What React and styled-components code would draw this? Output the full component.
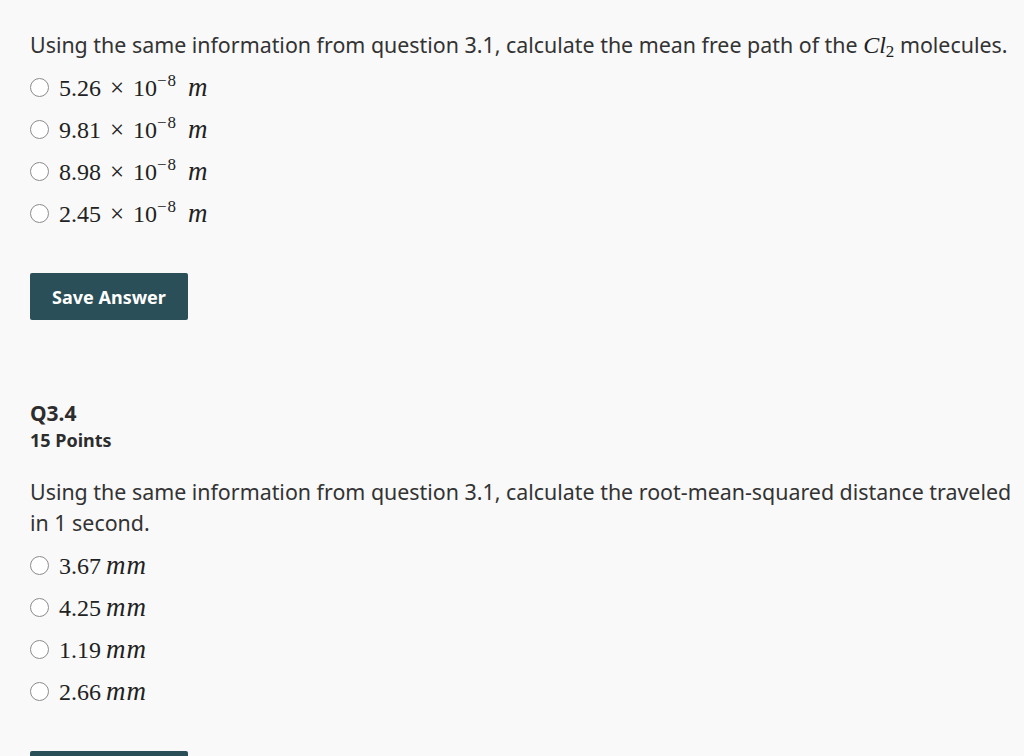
import React from "react";
import styled, { createGlobalStyle } from "styled-components";

const GlobalStyle = createGlobalStyle`
  html, body {
    margin: 0;
    padding: 0;
    background: #f9f9f9;
  }
  body {
    font-family: "Noto Sans", "Open Sans", sans-serif;
    color: #333;
    overflow: hidden;
  }
`;

const Page = styled.div`
  padding: 0 0 0 30px;
  margin-top: -22px;
`;

const Question = styled.section`
  display: flex;
  flex-direction: column;
`;

const Heading = styled.h2`
  margin: 0;
  font-size: 21px;
  font-weight: 700;
  line-height: 30px;
  color: #2d2d2d;
`;

const Points = styled.div`
  font-size: 18px;
  font-weight: 700;
  line-height: 24px;
  color: #2d2d2d;
`;

const Prompt = styled.p`
  margin: ${(p) => p.top}px 0 6px;
  font-size: 21.4px;
  line-height: 31px;
  color: #333;
`;

const Options = styled.div`
  display: flex;
  flex-direction: column;
`;

const Option = styled.label`
  display: flex;
  align-items: center;
  height: 42px;
  gap: 10px;
`;

const Radio = styled.span`
  width: 19px;
  height: 19px;
  box-sizing: border-box;
  border-radius: 50%;
  border: 1px solid #8c8c8c;
  background: #fff;
  flex-shrink: 0;
`;

const Math = styled.span`
  font-family: "Liberation Serif", "DejaVu Serif", serif;
  font-size: 24px;
  color: #222;
  white-space: nowrap;
  line-height: 1;
`;

const Op = styled.span`
  display: inline-block;
  width: 32px;
  text-align: center;
  font-size: 25px;
`;

const Var = styled.i`
  font-style: italic;
  font-size: ${(p) => p.size || 24}px;
  letter-spacing: ${(p) => p.spacing || 0}px;
  margin-left: ${(p) => p.gap || 0}px;
`;

const Sup = styled.sup`
  font-size: 17px;
  vertical-align: 0;
  position: relative;
  top: -10px;
  letter-spacing: 1px;
`;

const Sub = styled.sub`
  font-size: 17px;
  vertical-align: 0;
  position: relative;
  top: 4px;
`;

const SaveButton = styled.button`
  align-self: flex-start;
  width: 158px;
  height: 47px;
  margin-top: 39px;
  border: none;
  border-radius: 2px;
  background: #2b4f58;
  color: #fff;
  font-family: "Noto Sans", "Open Sans", sans-serif;
  font-weight: 700;
  font-size: 18px;
  cursor: pointer;
`;

const Spacer = styled.div`
  height: ${(p) => p.h}px;
`;

const sci = (m) => (
  <Math>
    {m}
    <Op>×</Op>10<Sup>−8</Sup>
    <Var gap={11} size={27}>m</Var>
  </Math>
);

const mm = (v) => (
  <Math>
    {v}
    <Var gap={5} size={27} spacing={1}>mm</Var>
  </Math>
);

const first = ["5.26", "9.81", "8.98", "2.45"];
const second = ["3.67", "4.25", "1.19", "2.66"];

export default function App() {
  return (
    <>
      <GlobalStyle />
      <Page>
        <Question>
          <Points>15 Points</Points>
          <Prompt top={27}>
            Using the same information from question 3.1, calculate the mean free path of the{" "}
            <Math>
              <Var>Cl</Var>
              <Sub>2</Sub>
            </Math>{" "}
            molecules.
          </Prompt>
          <Options>
            {first.map((v) => (
              <Option key={v}>
                <Radio />
                {sci(v)}
              </Option>
            ))}
          </Options>
          <SaveButton>Save Answer</SaveButton>
        </Question>
        <Spacer h={78} />
        <Question>
          <Heading>Q3.4</Heading>
          <Points>15 Points</Points>
          <Prompt top={24}>
            Using the same information from question 3.1, calculate the root-mean-squared distance traveled in 1 second.
          </Prompt>
          <Options>
            {second.map((v) => (
              <Option key={v}>
                <Radio />
                {mm(v)}
              </Option>
            ))}
          </Options>
          <SaveButton>Save Answer</SaveButton>
        </Question>
      </Page>
    </>
  );
}
